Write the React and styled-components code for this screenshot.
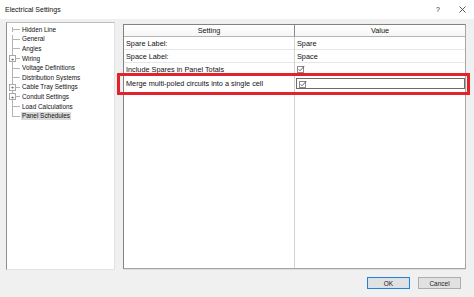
import React from 'react';
import styled, { createGlobalStyle } from 'styled-components';

const GlobalStyle = createGlobalStyle`
  html, body {
    margin: 0;
    padding: 0;
    background: #f0f0f0;
  }
  body {
    font-family: "Liberation Sans", Arial, sans-serif;
    color: #111;
  }
`;

const Dialog = styled.div`
  position: relative;
  width: 474px;
  height: 297px;
  display: flex;
  flex-direction: column;
  background: #f0f0f0;
  overflow: hidden;
`;

const TitleBar = styled.div`
  height: 19px;
  flex: none;
  display: flex;
  align-items: center;
  padding-left: 5px;
  background: #fff;
  font-size: 7px;
`;

const Title = styled.span`
  flex: 1;
`;

const TitleButton = styled.span`
  width: 24px;
  display: flex;
  justify-content: center;
  align-items: center;
  font-size: 7px;
  color: #222;
`;

const Body = styled.div`
  height: 251px;
  flex: none;
  display: flex;
  gap: 8px;
  padding: 3px 0 0 6px;
  box-sizing: border-box;
`;

const Tree = styled.ul`
  width: 109px;
  height: 248px;
  margin: 0;
  padding: 2px 0 0;
  box-sizing: border-box;
  list-style: none;
  background: #fff;
  border: 1px solid #e3e3e3;
  border-left: 1px solid #8f8f8f;
  border-top: 1px solid #bdbdbd;
  font-size: 6.4px;
`;

const TreeItem = styled.li`
  height: 9.6px;
  display: flex;
  align-items: center;
`;

const lineColor = '#b4b4b4';

const Connector = styled.span`
  width: 15px;
  height: 100%;
  flex: none;
  display: flex;
  align-items: center;
  padding-left: 2px;
  box-sizing: border-box;
  background:
    linear-gradient(${lineColor}, ${lineColor}) 5px ${p => (p.$pos === 'first' ? '50%' : '0')} /
      1px ${p => (p.$pos === 'mid' ? '100%' : '50%')} no-repeat,
    linear-gradient(${lineColor}, ${lineColor}) 5px 50% / 8px 1px no-repeat;
`;

const Expander = styled.span`
  width: 7px;
  height: 7px;
  box-sizing: border-box;
  border: 1px solid #a8a8a8;
  background: #fff;
  display: flex;
  align-items: center;
  justify-content: center;
  font-size: 6px;
  line-height: 1;
  color: #444;
`;

const Label = styled.span`
  padding: 0 1px;
  margin-left: -1px;
  line-height: 8px;
  background: ${p => (p.$selected ? '#d9d9d9' : 'transparent')};
  white-space: nowrap;
`;

const Grid = styled.div`
  margin-top: 2px;
  width: 343px;
  height: 245px;
  box-sizing: border-box;
  display: flex;
  flex-direction: column;
  background: #fff;
  border: 1px solid #a6a6a6;
  border-left-color: #828282;
  border-top-color: #828282;
  box-shadow: 0 1px 0 #dcdcdc;
  font-size: 7.3px;
`;

const Row = styled.div`
  display: grid;
  grid-template-columns: 171px 1fr;
  height: ${p => p.$h}px;
  flex: ${p => (p.$fill ? 1 : 'none')};
`;

const HeadCell = styled.div`
  display: flex;
  align-items: center;
  justify-content: center;
  background: linear-gradient(#ffffff, #f6f6f6);
  border-bottom: 1px solid #b5b5b5;
  border-right: ${p => (p.$first ? '1px solid #8c8c8c' : 'none')};
`;

const Cell = styled.div`
  display: flex;
  align-items: center;
  padding-left: 2px;
  white-space: nowrap;
  overflow: hidden;
  border-bottom: ${p => (p.$noLine ? 'none' : '1px solid #e6e6e6')};
  border-right: ${p => (p.$first ? '1px solid #d2d2d2' : 'none')};
`;

const EditBox = styled.div`
  flex: 1;
  align-self: stretch;
  margin: 2px 0 1px -1px;
  padding-left: 2px;
  display: flex;
  align-items: center;
  border: 1px solid #6b6b6b;
`;

const Footer = styled.div`
  flex: 1;
  display: flex;
  justify-content: flex-end;
  align-items: flex-start;
  gap: 8px;
  padding: 7px 13px 0 0;
`;

const Button = styled.button`
  width: 43px;
  height: 12px;
  padding: 0;
  font-family: inherit;
  font-size: 6.5px;
  color: #222;
  background: #e1e1e1;
  border: 1px solid ${p => (p.$primary ? '#2a7fd4' : '#adadad')};
  box-shadow: ${p => (p.$primary ? 'inset 0 0 0 1px #cfe3f7' : 'none')};
`;

const Highlight = styled.div`
  position: absolute;
  left: 117px;
  top: 73px;
  width: 353px;
  height: 22px;
  box-sizing: border-box;
  border: 3px solid #e3222b;
  pointer-events: none;
`;

const Check = () => (
  <svg width="8" height="8" viewBox="0 0 8 8">
    <rect x="0.5" y="1.5" width="6" height="6" fill="#fff" stroke="#8a8a8a" />
    <path d="M1.6 4.3 L3 5.8 L7.2 1.2" fill="none" stroke="#555" strokeWidth="0.9" />
  </svg>
);

const CloseIcon = () => (
  <svg width="7" height="7" viewBox="0 0 7 7">
    <path d="M0.5 0.5 L6.5 6.5 M6.5 0.5 L0.5 6.5" stroke="#333" strokeWidth="0.8" />
  </svg>
);

const treeItems = [
  { text: 'Hidden Line' },
  { text: 'General' },
  { text: 'Angles' },
  { text: 'Wiring', expand: true },
  { text: 'Voltage Definitions' },
  { text: 'Distribution Systems' },
  { text: 'Cable Tray Settings', expand: true },
  { text: 'Conduit Settings', expand: true },
  { text: 'Load Calculations' },
  { text: 'Panel Schedules', selected: true },
];

const rows = [
  { setting: 'Spare Label:', value: 'Spare' },
  { setting: 'Space Label:', value: 'Space' },
  { setting: 'Include Spares in Panel Totals', check: true },
];

export default function App() {
  return (
    <>
      <GlobalStyle />
      <Dialog>
        <TitleBar>
          <Title>Electrical Settings</Title>
          <TitleButton>?</TitleButton>
          <TitleButton><CloseIcon /></TitleButton>
        </TitleBar>
        <Body>
          <Tree>
            {treeItems.map((item, i) => (
              <TreeItem key={item.text}>
                <Connector $pos={i === 0 ? 'first' : i === treeItems.length - 1 ? 'last' : 'mid'}>
                  {item.expand && <Expander>+</Expander>}
                </Connector>
                <Label $selected={item.selected}>{item.text}</Label>
              </TreeItem>
            ))}
          </Tree>
          <Grid>
            <Row $h={12}>
              <HeadCell $first>Setting</HeadCell>
              <HeadCell>Value</HeadCell>
            </Row>
            {rows.map(r => (
              <Row $h={13} key={r.setting}>
                <Cell $first>{r.setting}</Cell>
                <Cell>{r.check ? <Check /> : r.value}</Cell>
              </Row>
            ))}
            <Row $h={14}>
              <Cell $first $noLine>Merge multi-poled circuits into a single cell</Cell>
              <Cell $noLine>
                <EditBox><Check /></EditBox>
              </Cell>
            </Row>
            <Row $fill>
              <Cell $first $noLine />
              <Cell $noLine />
            </Row>
          </Grid>
        </Body>
        <Footer>
          <Button $primary>OK</Button>
          <Button>Cancel</Button>
        </Footer>
        <Highlight />
      </Dialog>
    </>
  );
}
